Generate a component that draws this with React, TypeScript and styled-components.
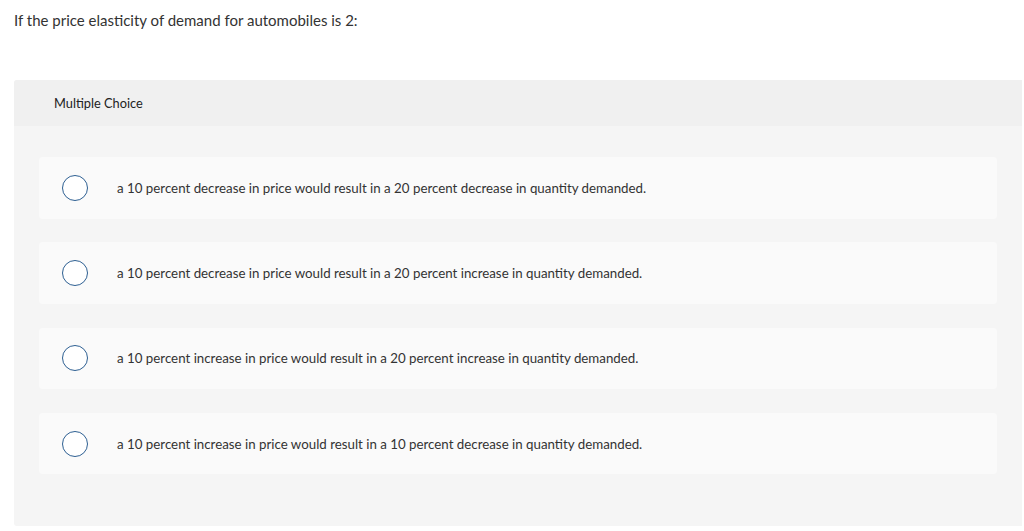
import React from "react";
import styled, { createGlobalStyle } from "styled-components";

const Global = createGlobalStyle`
  html, body { margin: 0; padding: 0; background: #ffffff; }
  body { font-family: Lato, "Open Sans", "Liberation Sans", sans-serif; color: #333333; }
`;

const Page = styled.div`
  padding: 10px 2px 0 14px;
`;

const Question = styled.p`
  margin: 0;
  font-size: 15px;
  line-height: 20px;
  color: #333333;
`;

const Panel = styled.section`
  margin-top: 50px;
  background: #f5f5f5;
  border-radius: 3px 0 0 3px;
  overflow: hidden;
`;

const PanelHeader = styled.div`
  height: 46px;
  display: flex;
  align-items: center;
  padding-left: 40px;
  background: #f0f0f0;
  font-size: 12.8px;
  color: #222222;
`;

const OptionList = styled.div`
  display: flex;
  flex-direction: column;
  gap: 23.8px;
  padding: 31px 25px 52px 25px;
`;

const Option = styled.label`
  display: flex;
  align-items: center;
  height: 61.5px;
  padding-left: 23px;
  background: #fafafa;
  border-radius: 4px;
  cursor: pointer;
`;

const Radio = styled.span`
  width: 26px;
  height: 26px;
  box-sizing: border-box;
  border-radius: 50%;
  border: 1.5px solid #2d5f92;
  background: #ffffff;
  flex-shrink: 0;
`;

const OptionText = styled.span`
  margin-left: 29px;
  font-size: 13.3px;
  color: #333333;
`;

const options = [
  "a 10 percent decrease in price would result in a 20 percent decrease in quantity demanded.",
  "a 10 percent decrease in price would result in a 20 percent increase in quantity demanded.",
  "a 10 percent increase in price would result in a 20 percent increase in quantity demanded.",
  "a 10 percent increase in price would result in a 10 percent decrease in quantity demanded.",
];

export default function App() {
  return (
    <>
      <Global />
      <Page>
        <Question>If the price elasticity of demand for automobiles is 2:</Question>
        <Panel>
          <PanelHeader>Multiple Choice</PanelHeader>
          <OptionList>
            {options.map((o) => (
              <Option key={o}>
                <Radio />
                <OptionText>{o}</OptionText>
              </Option>
            ))}
          </OptionList>
        </Panel>
      </Page>
    </>
  );
}
